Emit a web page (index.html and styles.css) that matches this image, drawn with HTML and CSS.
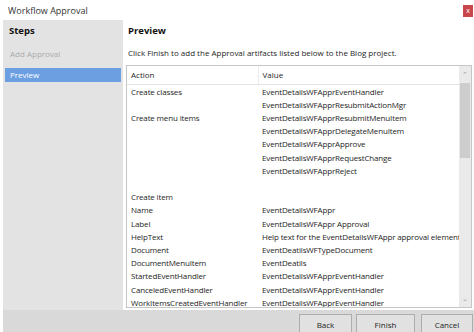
FILE: index.html
```html
<!DOCTYPE html>
<html lang="en">
<head>
    <meta charset="UTF-8">
    <title>Workflow Approval</title>
    <link rel="stylesheet" href="styles.css">
</head>
<body>
    <div class="window">
        <div class="titlebar">
            <span class="title">Workflow Approval</span>
            <span class="close">x</span>
        </div>

        <div class="main">
            <div class="steps">
                <h2>Steps</h2>
                <div class="step disabled">Add Approval</div>
                <div class="step active">Preview</div>
            </div>

            <div class="page">
                <h2>Preview</h2>
                <p class="intro">Click Finish to add the Approval artifacts listed below to the Blog project.</p>

                <div class="grid">
                    <div class="grid-view">
                        <table>
                            <thead>
                                <tr><th class="col-action">Action</th><th>Value</th></tr>
                            </thead>
                            <tbody>
                                <tr><td>Create classes</td><td>EventDetailsWFApprEventHandler</td></tr>
                                <tr><td></td><td>EventDetailsWFApprResubmitActionMgr</td></tr>
                                <tr><td>Create menu items</td><td>EventDetailsWFApprResubmitMenuItem</td></tr>
                                <tr><td></td><td>EventDetailsWFApprDelegateMenuItem</td></tr>
                                <tr><td></td><td>EventDetailsWFApprApprove</td></tr>
                                <tr><td></td><td>EventDetailsWFApprRequestChange</td></tr>
                                <tr><td></td><td>EventDetailsWFApprReject</td></tr>
                                <tr><td></td><td></td></tr>
                                <tr><td>Create item</td><td></td></tr>
                                <tr><td>Name</td><td>EventDetailsWFAppr</td></tr>
                                <tr><td>Label</td><td>EventDetailsWFAppr Approval</td></tr>
                                <tr><td>HelpText</td><td>Help text for the EventDetailsWFAppr approval element</td></tr>
                                <tr><td>Document</td><td>EventDeatilsWFTypeDocument</td></tr>
                                <tr><td>DocumentMenuItem</td><td>EventDeatils</td></tr>
                                <tr><td>StartedEventHandler</td><td>EventDetailsWFApprEventHandler</td></tr>
                                <tr><td>CanceledEventHandler</td><td>EventDetailsWFApprEventHandler</td></tr>
                                <tr><td>WorkItemsCreatedEventHandler</td><td>EventDetailsWFApprEventHandler</td></tr>
                            </tbody>
                        </table>
                    </div>
                    <div class="scrollbar">
                        <div class="arrow">&#8963;</div>
                        <div class="thumb"></div>
                        <div class="track"></div>
                        <div class="arrow">&#8964;</div>
                    </div>
                </div>
            </div>
        </div>

        <div class="footer">
            <button class="btn btn-back">Back</button>
            <button class="btn btn-finish">Finish</button>
            <button class="btn btn-cancel">Cancel</button>
        </div>
    </div>
</body>
</html>
```

FILE: styles.css
```css
* {
    margin: 0;
    padding: 0;
    box-sizing: border-box;
}

body {
    font-family: 'Open Sans', 'Noto Sans', sans-serif;
    font-size: 8px;
    color: #1e1e1e;
    background-color: white;
    width: 474px;
    height: 332px;
    overflow: hidden;
}

.window {
    display: flex;
    flex-direction: column;
    height: 332px;
    padding-left: 3px;
}

.titlebar {
    height: 20px;
    flex-shrink: 0;
    display: flex;
    align-items: center;
    justify-content: space-between;
    padding: 0 1px 0 5px;
}

.title {
    font-size: 9px;
    color: #333;
}

.close {
    width: 10px;
    height: 12px;
    margin-top: 2px;
    background-color: #c9474a;
    color: white;
    font-size: 7px;
    line-height: 11px;
    text-align: center;
}

.main {
    display: flex;
    height: 290px;
    flex-shrink: 0;
}

.steps {
    width: 120px;
    flex-shrink: 0;
    background-color: #e3e3e3;
    padding: 2px 2px 0 2px;
}

.steps h2,
.page h2 {
    font-size: 9.5px;
    font-weight: 700;
    height: 18px;
    line-height: 18px;
    padding-left: 4px;
    color: #111;
}

.step {
    height: 14px;
    line-height: 14px;
    padding-left: 5px;
}

.step.disabled {
    color: #aaa;
    margin-top: 7px;
    margin-bottom: 7px;
}

.step.active {
    background-color: #6c9fe1;
    color: white;
}

.page {
    flex: 1;
    min-width: 0;
    padding: 2px 2px 0 3px;
}

.page h2 {
    padding-left: 2px;
}

.intro {
    height: 12px;
    line-height: 12px;
    margin-top: 7px;
    padding-left: 2px;
}

.grid {
    margin-top: 6px;
    height: 243px;
    border: 1px solid #c6c6c6;
    display: flex;
    overflow: hidden;
}

.grid-view {
    flex: 1;
    min-width: 0;
    overflow: hidden;
}

table {
    width: 100%;
    table-layout: fixed;
    border-collapse: collapse;
    white-space: nowrap;
}

th {
    height: 18px;
    font-weight: 400;
    text-align: left;
    padding-left: 4px;
    border-bottom: 1px solid #e4e4e4;
}

th + th {
    border-left: 1px solid #ececec;
}

.col-action {
    width: 131px;
}

td {
    height: 13.2px;
    line-height: 13.2px;
    padding-left: 4px;
    letter-spacing: -0.15px;
    overflow: hidden;
}

.scrollbar {
    width: 12px;
    flex-shrink: 0;
    display: flex;
    flex-direction: column;
    background-color: #eaeaea;
}

.arrow {
    height: 17px;
    color: #999;
    font-size: 7px;
    line-height: 17px;
    text-align: center;
}

.thumb {
    height: 75px;
    margin: 0 1px;
    background-color: #cdcdcd;
}

.track {
    flex: 1;
}

.footer {
    flex: 1;
    background-color: #d9d9d9;
    display: flex;
    justify-content: flex-end;
    align-items: flex-start;
    gap: 4px;
    padding: 4px 1px 0 0;
}

.btn {
    height: 20px;
    font-family: inherit;
    font-size: 8px;
    color: #222;
    background-color: #e1e1e1;
    border: 1px solid #adadad;
}

.btn-back {
    width: 53px;
}

.btn-finish {
    width: 59px;
    margin-right: 2px;
}

.btn-cancel {
    width: 52px;
}
```
